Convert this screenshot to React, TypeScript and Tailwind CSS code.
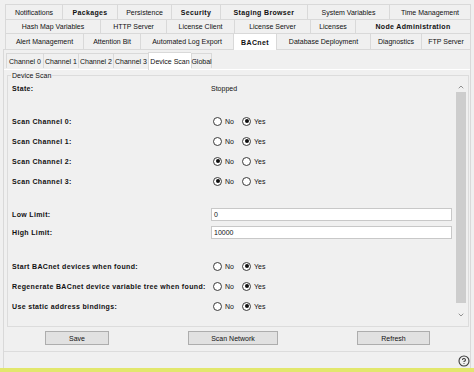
import React from 'react';
import { ChevronUp, ChevronDown, CircleHelp } from 'lucide-react';

interface Tab {
  label: string;
  width: string;
  bold?: boolean;
  active?: boolean;
}

const topRows: Tab[][] = [
  [
    { label: 'Notifications', width: 'w-[57px]' },
    { label: 'Packages', width: 'w-[55px]', bold: true },
    { label: 'Persistence', width: 'w-[54px]' },
    { label: 'Security', width: 'w-[49px]', bold: true },
    { label: 'Staging Browser', width: 'w-[87px]', bold: true },
    { label: 'System Variables', width: 'w-[82px]' },
    { label: 'Time Management', width: 'w-[82px]' },
  ],
  [
    { label: 'Hash Map Variables', width: 'w-[95px]' },
    { label: 'HTTP Server', width: 'w-[66px]' },
    { label: 'License Client', width: 'w-[68px]' },
    { label: 'License Server', width: 'w-[76px]' },
    { label: 'Licenses', width: 'w-[45px]' },
    { label: 'Node Administration', width: 'w-[116px]', bold: true },
  ],
  [
    { label: 'Alert Management', width: 'w-[78px]' },
    { label: 'Attention Bit', width: 'w-[57px]' },
    { label: 'Automated Log Export', width: 'w-[93px]' },
    { label: 'BACnet', width: 'w-[43px]', bold: true, active: true },
    { label: 'Database Deployment', width: 'w-[94px]' },
    { label: 'Diagnostics', width: 'w-[51px]' },
    { label: 'FTP Server', width: 'w-[50px]' },
  ],
];

const rowHeights = ['h-[15px]', 'h-[14px]', 'h-[16px]'];

const innerTabs: Tab[] = [
  { label: 'Channel 0', width: 'w-[37px]' },
  { label: 'Channel 1', width: 'w-[35px]' },
  { label: 'Channel 2', width: 'w-[35px]' },
  { label: 'Channel 3', width: 'w-[35px]' },
  { label: 'Device Scan', width: 'w-[43px]', active: true },
  { label: 'Global', width: 'w-[21px]' },
];

const Radio = ({ checked, label }: { checked: boolean; label: string }) => (
  <span className="flex items-center gap-[3px]">
    <span className="w-[9px] h-[9px] rounded-full border border-[#3a3a3a] bg-white flex items-center justify-center">
      {checked && <span className="w-[4px] h-[4px] rounded-full bg-[#111]" />}
    </span>
    <span>{label}</span>
  </span>
);

const YesNo = ({ yes }: { yes: boolean }) => (
  <div className="flex items-center pl-[2px]">
    <div className="w-[29px]">
      <Radio checked={!yes} label="No" />
    </div>
    <Radio checked={yes} label="Yes" />
  </div>
);

const Row = ({ label, h, children }: { label: string; h: string; children: React.ReactNode }) => (
  <div className={`flex items-center ${h}`}>
    <div className="w-[199px] font-bold tracking-[0.35px] whitespace-nowrap">{label}</div>
    <div className="flex-1">{children}</div>
  </div>
);

export default function App() {
  return (
    <div className="w-[474px] h-[372px] bg-[#f0f0f0] overflow-hidden flex flex-col text-[7px] text-[#111] font-['Liberation_Sans',Arial,sans-serif] leading-none">
      {/* Top tab rows */}
      <div className="pt-[4px] pl-[5px]">
        {topRows.map((row, i) => (
          <div key={i} className={`flex ${rowHeights[i]}`}>
            {row.map((t, j) => (
              <div
                key={t.label}
                className={`${t.width} flex items-center justify-center border-t border-l border-[#d9d9d9] whitespace-nowrap ${
                  j === row.length - 1 ? 'border-r' : ''
                } ${t.bold ? 'font-bold tracking-[0.35px]' : ''} ${
                  t.active ? 'bg-white h-[17px] relative z-10 -mb-[1px]' : ''
                }`}
              >
                {t.label}
              </div>
            ))}
          </div>
        ))}
      </div>

      {/* Main pane */}
      <div className="flex-1 mx-[3px] border-t border-l border-r border-[#d9d9d9] flex flex-col">
        {/* Inner tabs */}
        <div className="flex pt-[3px] pl-[2px] h-[18px] items-end">
          {innerTabs.map((t, j) => (
            <div
              key={t.label}
              className={`${t.width} flex items-center justify-center border-t border-l border-[#d9d9d9] whitespace-nowrap ${
                j === innerTabs.length - 1 ? 'border-r' : ''
              } ${t.active ? 'bg-white h-[18px] relative z-10 -mb-[2px]' : 'h-[15px]'}`}
            >
              {t.label}
            </div>
          ))}
        </div>
        <div className="border-t border-white mt-[1px]" />

        {/* Group box */}
        <div className="relative ml-[3px] mr-[1px] mt-[5px] h-[252px] border border-[#dcdcdc] flex">
          <span className="absolute -top-[4px] left-[3px] px-[1px] bg-[#f0f0f0]">Device Scan</span>
          <div className="flex-1 pl-[4px] pt-[3px]">
            <Row label="State:" h="h-[18px]">Stopped</Row>
            <div className="h-[14px]" />
            <Row label="Scan Channel 0:" h="h-[20px]"><YesNo yes /></Row>
            <Row label="Scan Channel 1:" h="h-[20px]"><YesNo yes /></Row>
            <Row label="Scan Channel 2:" h="h-[20px]"><YesNo yes={false} /></Row>
            <Row label="Scan Channel 3:" h="h-[20px]"><YesNo yes={false} /></Row>
            <div className="h-[14px]" />
            <Row label="Low Limit:" h="h-[18px]">
              <div className="h-[13px] w-[241px] bg-white border border-[#c8c8c8] flex items-center pl-[2px]">0</div>
            </Row>
            <Row label="High Limit:" h="h-[18px]">
              <div className="h-[13px] w-[241px] bg-white border border-[#c8c8c8] flex items-center pl-[2px]">10000</div>
            </Row>
            <div className="h-[15px]" />
            <Row label="Start BACnet devices when found:" h="h-[20px]"><YesNo yes /></Row>
            <Row label="Regenerate BACnet device variable tree when found:" h="h-[20px]"><YesNo yes /></Row>
            <Row label="Use static address bindings:" h="h-[20px]"><YesNo yes /></Row>
          </div>
          {/* Scrollbar */}
          <div className="w-[10px] mr-[2px] my-[6px] flex flex-col items-center">
            <ChevronUp size={8} strokeWidth={2} className="text-[#606060] mt-[1px]" />
            <div className="w-full flex-1 bg-[#cdcdcd] mt-[1px] mb-[8px]" />
            <ChevronDown size={8} strokeWidth={2} className="text-[#606060] mb-[1px]" />
          </div>
        </div>

        {/* Buttons */}
        <div className="flex mt-[4px] h-[14px]">
          <button className="ml-[41px] w-[64px] h-full bg-[#e1e1e1] border border-[#adadad]">Save</button>
          <button className="ml-[79px] w-[90px] h-full bg-[#e1e1e1] border border-[#adadad]">Scan Network</button>
          <button className="ml-[79px] w-[73px] h-full bg-[#e1e1e1] border border-[#adadad]">Refresh</button>
        </div>
        <div className="mt-[6px] border-t border-[#dcdcdc]" />
        <div className="flex-1 flex items-end justify-end pb-[1px]">
          <CircleHelp size={12} strokeWidth={2.2} className="text-[#3a3a3a]" />
        </div>
      </div>
      <div className="h-[4px] bg-[#e2e76c]" />
    </div>
  );
}
